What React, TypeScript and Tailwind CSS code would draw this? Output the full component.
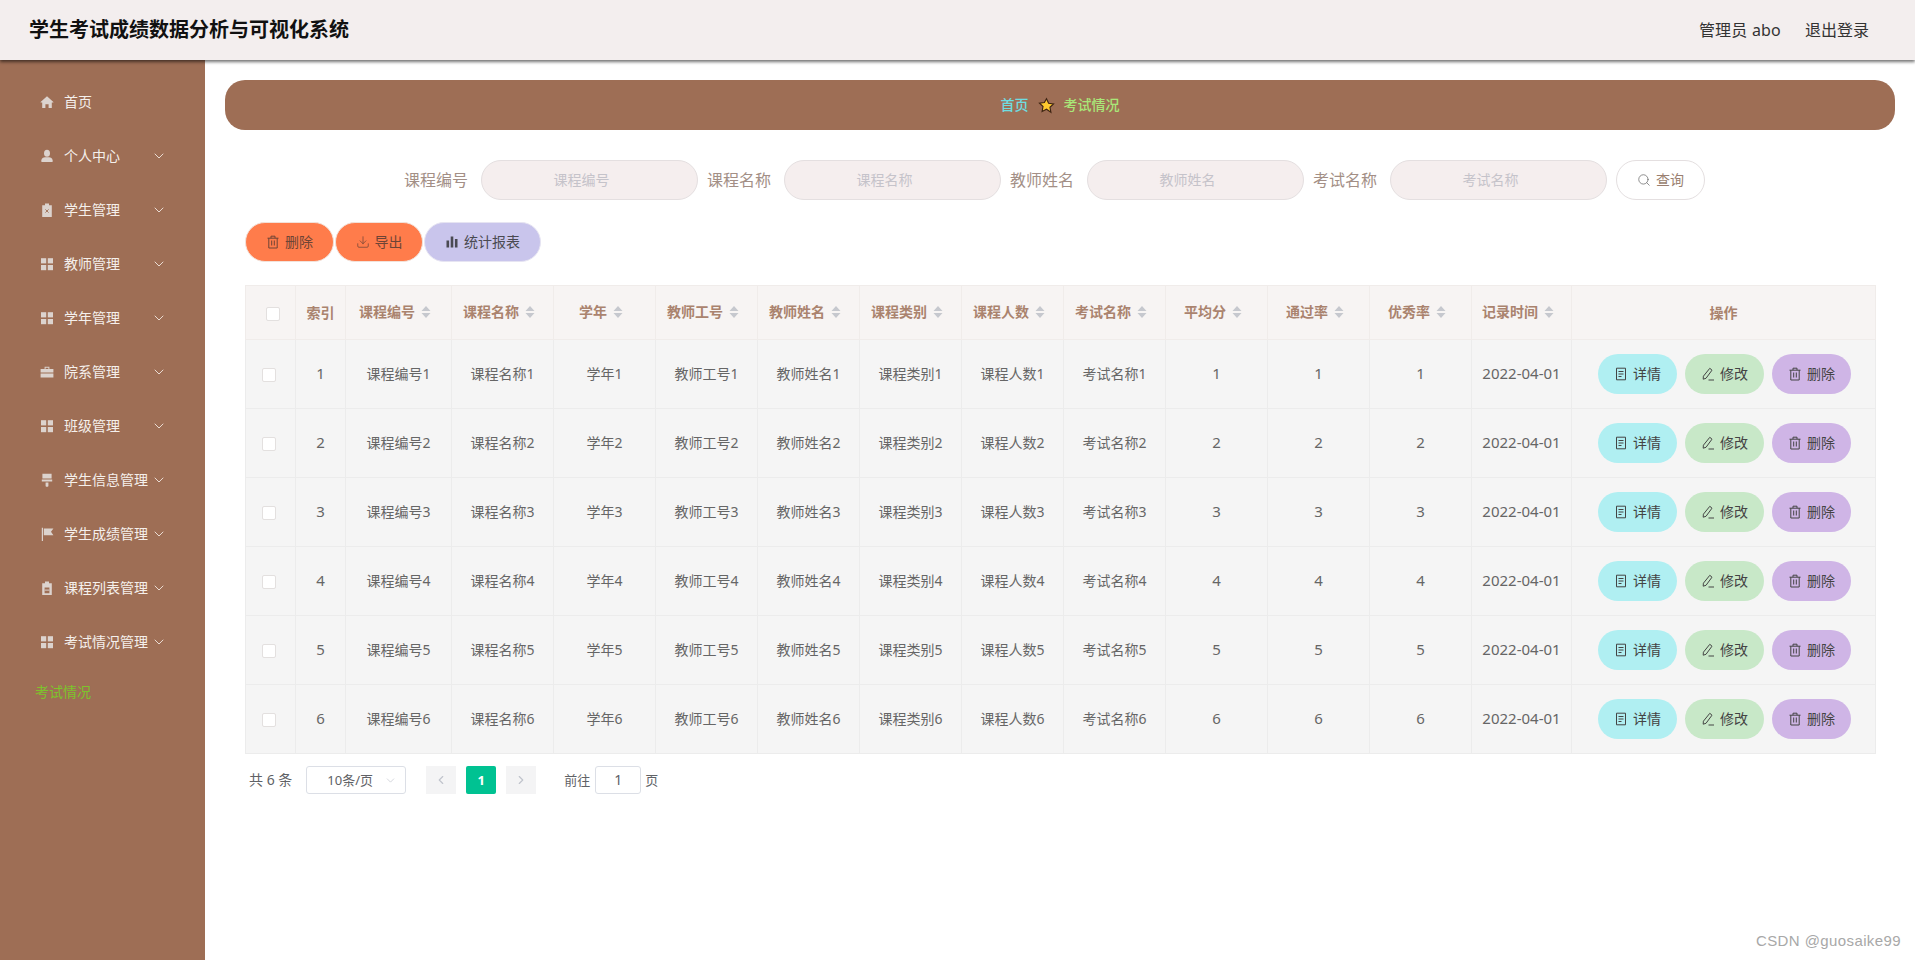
import type { ReactNode } from 'react';
import { ChevronDown, ChevronLeft, ChevronRight, Download, Search } from 'lucide-react';

const FONT = '[font-family:"Noto_Sans","Noto_Sans_CJK_SC",sans-serif]';

const Glyph = ({ children, className = 'h-[14px] w-[14px]' }: { children: ReactNode; className?: string }) => (
  <svg viewBox="0 0 14 14" className={className} fill="currentColor">
    {children}
  </svg>
);

const HomeIcon = () => (
  <Glyph>
    <path d="M7 1.2 13.4 7v.6h-1.6V13H8.6V9.2H5.4V13H2.2V7.6H.6V7z" />
  </Glyph>
);
const UserIcon = () => (
  <Glyph>
    <ellipse cx="7" cy="4.2" rx="3" ry="3.5" />
    <path d="M1.4 13v-1.8c0-2 2-3 3.6-3h4c1.600 0 3.600 1 3.600 3V13z" />
  </Glyph>
);
const OrderIcon = () => (
  <Glyph>
    <path d="M5 .6h4v1.600h2.800V14H2.200V2.200H5z" />
    <path d="m5.400 6.400 3.200 3.200m0-3.200-3.200 3.200" stroke="#9e6e55" strokeWidth=".9" />
  </Glyph>
);
const GridIcon = () => (
  <Glyph>
    <rect x="1" y="1.200" width="5.200" height="5.200" />
    <rect x="7.800" y="1.200" width="5.200" height="5.200" />
    <rect x="1" y="8" width="5.200" height="5.200" />
    <rect x="7.800" y="8" width="5.200" height="5.200" />
  </Glyph>
);
const CaseIcon = () => (
  <Glyph>
    <path d="M4.600 4V1.800h4.800V4h-1V2.800H5.600V4z" />
    <path d="M.6 4h12.800v3.600H.6zM.6 8.600h12.800V12.600H.6z" />
  </Glyph>
);
const BrushIcon = () => (
  <Glyph>
    <path d="M2.400 .8h9.200v4.600H2.400zM1.800 6.400h10.400v2H1.800zM5.600 9.400h2.800v3.800l-1.400 .8-1.400-.8z" />
  </Glyph>
);
const FlagIcon = () => (
  <Glyph>
    <path d="M1.800 .8h1.200V14H1.800zM3.800 1.400h9.600L11 4.800l2.400 3.400H3.800z" />
  </Glyph>
);
const ClipIcon = () => (
  <Glyph>
    <path
      fillRule="evenodd"
      d="M5 .6h4v1.600h2.800V14H2.200V2.200H5zM4.600 6.400v5.800h4.800V6.400z"
    />
    <rect x="4.600" y="8.600" width="4.800" height="1" />
  </Glyph>
);

const TrashIcon = () => (
  <svg viewBox="0 0 14 14" className="h-[14px] w-[14px]" fill="none" stroke="currentColor" strokeWidth="1">
    <path d="M1.500 3.200h11M5 3.200V1.200h4v2M2.800 3.200V13h8.400V3.200M5.700 5.500v5M8.300 5.500v5" />
  </svg>
);
const DocIcon = () => (
  <svg viewBox="0 0 14 14" className="h-[14px] w-[14px]" fill="none" stroke="currentColor" strokeWidth="1">
    <path d="M2.500 1.200h9v11.600h-9zM4.500 4.500h5M4.500 7h5M4.500 9.500h3" />
  </svg>
);
const EditIcon = () => (
  <svg viewBox="0 0 14 14" className="h-[14px] w-[14px]" fill="none" stroke="currentColor" strokeWidth="1">
    <path d="M8.800 1.300 11 3.200 5 11.300l-2.800.9.200-3zM7.500 13h5.500" />
  </svg>
);
const BarsIcon = () => (
  <svg viewBox="0 0 14 14" className="h-[14px] w-[14px]" fill="currentColor">
    <path d="M1.500 5.500h2.600v7H1.500zM5.700 1.500h2.600v11H5.700zM9.900 4h2.600v8.500H9.900z" />
  </svg>
);

const SortCaret = () => (
  <svg viewBox="0 0 10 14" className="h-[14px] w-[10px] shrink-0" fill="#c6c8ce">
    <path d="M5 1 9.500 6h-9zM5 13 .5 8h9z" />
  </svg>
);

const MENU: { label: string; icon: ReactNode; sub?: boolean }[] = [
  { label: '首页', icon: <HomeIcon /> },
  { label: '个人中心', icon: <UserIcon />, sub: true },
  { label: '学生管理', icon: <OrderIcon />, sub: true },
  { label: '教师管理', icon: <GridIcon />, sub: true },
  { label: '学年管理', icon: <GridIcon />, sub: true },
  { label: '院系管理', icon: <CaseIcon />, sub: true },
  { label: '班级管理', icon: <GridIcon />, sub: true },
  { label: '学生信息管理', icon: <BrushIcon />, sub: true },
  { label: '学生成绩管理', icon: <FlagIcon />, sub: true },
  { label: '课程列表管理', icon: <ClipIcon />, sub: true },
  { label: '考试情况管理', icon: <GridIcon />, sub: true }
];

const COLUMNS = [
  { title: '课程编号', w: 'w-[106px]', text: (n: number) => `课程编号${n}` },
  { title: '课程名称', w: 'w-[102px]', text: (n: number) => `课程名称${n}` },
  { title: '学年', w: 'w-[102px]', text: (n: number) => `学年${n}` },
  { title: '教师工号', w: 'w-[102px]', text: (n: number) => `教师工号${n}` },
  { title: '教师姓名', w: 'w-[102px]', text: (n: number) => `教师姓名${n}` },
  { title: '课程类别', w: 'w-[102px]', text: (n: number) => `课程类别${n}` },
  { title: '课程人数', w: 'w-[102px]', text: (n: number) => `课程人数${n}` },
  { title: '考试名称', w: 'w-[102px]', text: (n: number) => `考试名称${n}` },
  { title: '平均分', w: 'w-[102px]', text: (n: number) => `${n}`, num: true },
  { title: '通过率', w: 'w-[102px]', text: (n: number) => `${n}`, num: true },
  { title: '优秀率', w: 'w-[102px]', text: (n: number) => `${n}`, num: true },
  { title: '记录时间', w: 'w-[100px]', text: () => '2022-04-01', num: true }
];

const FILTERS = ['课程编号', '课程名称', '教师姓名', '考试名称'];
const ROWS = [1, 2, 3, 4, 5, 6];

const Checkbox = () => <span className="inline-block h-[14px] w-[14px] rounded-[2px] border border-[#e3e0df] bg-white align-middle" />;

function RowAction({ bg, icon, label }: { bg: string; icon: ReactNode; label: string }) {
  return (
    <button type="button" className={`flex h-10 w-[79px] items-center justify-center gap-[5px] rounded-[20px] text-sm text-[#444] ${bg}`}>
      {icon}
      {label}
    </button>
  );
}

export default function App() {
  return (
    <div className={`relative flex h-[960px] flex-col overflow-hidden bg-white ${FONT}`}>
      <header className="relative z-10 flex h-[60px] shrink-0 items-center bg-[#f3eeee] pl-[29px] pr-[46px] shadow-[0_2px_3px_rgba(0,0,0,0.55)]">
        <h1 className="text-xl font-bold text-[#111]">学生考试成绩数据分析与可视化系统</h1>
        <span className="ml-auto text-base tracking-[0.2px] text-[#333]">管理员 abo</span>
        <span className="ml-6 text-base text-[#333]">退出登录</span>
      </header>

      <div className="flex min-h-0 flex-1">
        <aside className="w-[205px] shrink-0 bg-[#9e6e55] pt-[15px]">
          {MENU.map(item => (
            <div key={item.label} className="flex h-[54px] items-center pl-10 pr-[38px] text-sm text-[#f5f0ec]">
              <span className="mr-[10px] text-[#dcd3ce]">{item.icon}</span>
              <span className="whitespace-nowrap">{item.label}</span>
              {item.sub && <ChevronDown size={16} strokeWidth={1.5} className="ml-auto shrink-0 text-[#eadbd2]" />}
            </div>
          ))}
          <div className="flex h-[45px] items-center pl-[35px] text-sm text-[#7cc42c]">考试情况</div>
        </aside>

        <main className="min-w-0 flex-1 px-5 pt-5">
          <div className="flex h-[50px] items-center justify-center rounded-[20px] bg-[#9e6e55] text-sm font-medium">
            <span className="text-[#6fdde0]">首页</span>
            <svg viewBox="0 0 24 24" className="mx-[9px] h-[17px] w-[17px]" fill="#ffcb2f" stroke="#3d2413" strokeWidth="1.6">
              <path d="m12 2.500 3 6.300 6.900.9-5 4.800 1.300 6.900L12 17.200l-6.200 3.200 1.300-6.900-5-4.800 6.900-.9z" />
            </svg>
            <span className="text-[#a9e778]">考试情况</span>
          </div>

          <div className="mt-[30px] flex items-center justify-center pr-[11px]">
            {FILTERS.map(f => (
              <div key={f} className="mr-[9px] flex items-center gap-[13px]">
                <label className="text-base text-[#a38f86]">{f}</label>
                <input
                  placeholder={f}
                  readOnly
                  className="h-10 w-[217px] rounded-[20px] border border-[#e4dfe0] bg-[#f5eeee] pb-[2px] pr-4 text-center text-sm outline-none placeholder:text-[#c5c3ca]"
                />
              </div>
            ))}
            <button type="button" className="flex h-10 w-[89px] items-center justify-center gap-[5px] rounded-[20px] border border-[#e4dfe0] bg-white text-sm text-[#9a7f70]">
              <Search size={14} strokeWidth={1.25} className="text-[#666]" />
              查询
            </button>
          </div>

          <div className="px-5">
            <div className="mt-[22px] flex gap-[1px]">
              <button type="button" className="flex h-10 w-[89px] items-center justify-center gap-[5px] rounded-[20px] border border-[#f2e2da] bg-[#ff7c4b] text-sm text-[#6e4436]">
                <TrashIcon />
                删除
              </button>
              <button type="button" className="flex h-10 w-[88px] items-center justify-center gap-[5px] rounded-[20px] border border-[#f2e2da] bg-[#ff7c4b] text-sm text-[#6e4436]">
                <Download size={14} strokeWidth={1.25} />
                导出
              </button>
              <button type="button" className="flex h-10 w-[117px] items-center justify-center gap-[5px] rounded-[20px] border border-[#e6e4f2] bg-[#c9c5ec] text-sm text-[#4a4a52]">
                <BarsIcon />
                统计报表
              </button>
            </div>

            <table className="mt-[23px] w-[1630px] table-fixed border-collapse text-sm">
              <colgroup>
                <col className="w-[50px]" />
                <col className="w-[50px]" />
                {COLUMNS.map(c => (
                  <col key={c.title} className={c.w} />
                ))}
                <col className="w-[304px]" />
              </colgroup>
              <thead>
                <tr className="h-[54px] bg-[#f7f4f3] font-bold text-[#aa836e]">
                  <th className="border border-[#f0ecea] pl-[4px]">
                    <Checkbox />
                  </th>
                  <th className="border border-[#f0ecea] font-bold">索引</th>
                  {COLUMNS.map(c => (
                    <th key={c.title} className="border border-[#f0ecea] font-bold">
                      <span className="mb-[2px] flex items-center justify-center gap-[6px] pr-[7px]">
                        {c.title}
                        <SortCaret />
                      </span>
                    </th>
                  ))}
                  <th className="border border-[#f0ecea] font-bold">操作</th>
                </tr>
              </thead>
              <tbody>
                {ROWS.map(n => (
                  <tr key={n} className="h-[69px] bg-[#f5f5f5] text-center text-[#666]">
                    <td className="border border-[#ececec] pr-[4px]">
                      <Checkbox />
                    </td>
                    <td className="border border-[#ececec] text-[15px]">{n}</td>
                    {COLUMNS.map(c => (
                      <td key={c.title} className={c.num ? 'border border-[#ececec] text-[15px]' : 'border border-[#ececec]'}>
                        {c.text(n)}
                      </td>
                    ))}
                    <td className="border border-[#ececec]">
                      <div className="flex justify-center gap-2 pl-[2px]">
                        <RowAction bg="bg-[#b0eff2]" icon={<DocIcon />} label="详情" />
                        <RowAction bg="bg-[#c8e8c8]" icon={<EditIcon />} label="修改" />
                        <RowAction bg="bg-[#cfb5e6]" icon={<TrashIcon />} label="删除" />
                      </div>
                    </td>
                  </tr>
                ))}
              </tbody>
            </table>

            <div className="mt-3 flex h-[28px] items-center text-sm text-[#606266]">
              <span className="ml-1">共 6 条</span>
              <div className="ml-[14px] flex h-[28px] w-[100px] items-center rounded-[3px] border border-[#dcdfe6] pl-5 pr-2 text-[13px]">
                10条/页
                <ChevronDown size={13} strokeWidth={1.25} className="ml-auto text-[#c0c4cc]" />
              </div>
              <span className="ml-5 flex h-[28px] w-[30px] items-center justify-center bg-[#f4f4f5] text-[#c0c4cc]">
                <ChevronLeft size={14} />
              </span>
              <span className="ml-[10px] flex h-[28px] w-[30px] items-center justify-center rounded-[2px] bg-[#00c292] text-[13px] font-bold text-white">1</span>
              <span className="ml-[10px] flex h-[28px] w-[30px] items-center justify-center bg-[#f4f4f5] text-[#c0c4cc]">
                <ChevronRight size={14} />
              </span>
              <span className="ml-[28px] text-[13px]">前往</span>
              <span className="ml-[5px] flex h-[28px] w-[46px] items-center justify-center rounded-[3px] border border-[#dcdfe6]">1</span>
              <span className="ml-1 text-[13px]">页</span>
            </div>
          </div>
        </main>
      </div>

      <span className="absolute bottom-[8px] right-[14px] text-[15px] tracking-[0.4px] text-[#a8a8a8] [font-family:'Liberation_Sans',sans-serif]">CSDN @guosaike99</span>
    </div>
  );
}
